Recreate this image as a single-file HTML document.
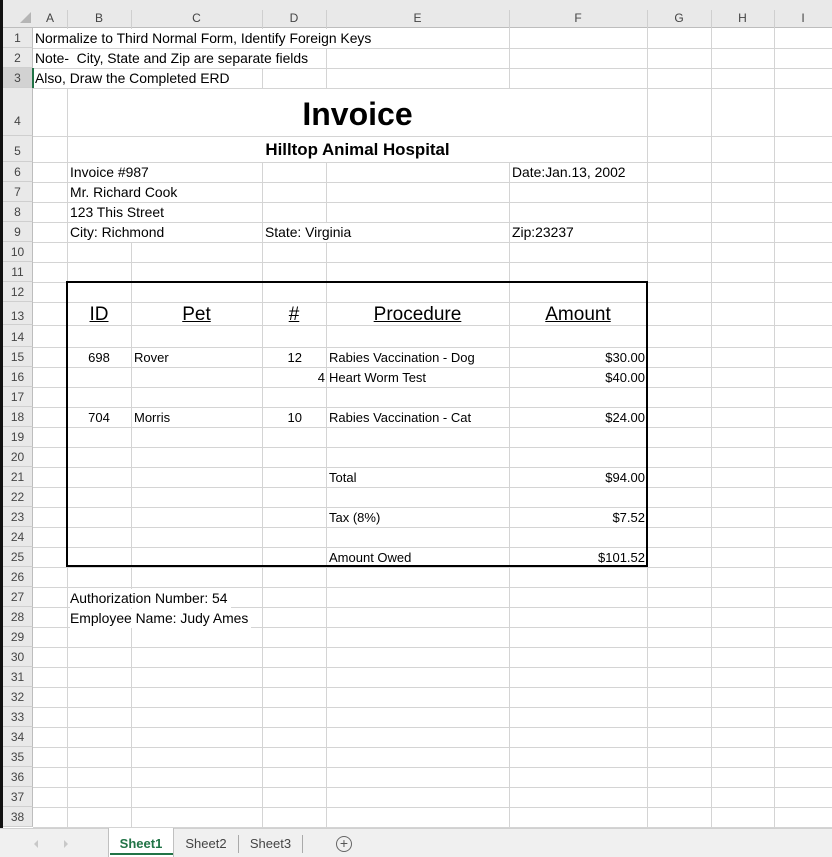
<!DOCTYPE html>
<html><head><meta charset="utf-8"><style>
*{margin:0;padding:0;box-sizing:border-box}
body{width:832px;height:857px;overflow:hidden;background:#fff;position:relative;font-family:"Liberation Sans",Arial,sans-serif}
.a{position:absolute;white-space:nowrap}
.v{position:absolute;top:28px;width:1px;height:800px;background:#d4d4d4}
.h{position:absolute;left:33px;width:799px;height:1px;background:#d4d4d4}
.rh{position:absolute;left:3px;width:30px;font-size:12px;color:#444;text-align:center;background:#e9e9e9;border-bottom:1px solid #cfcfcf;border-right:1px solid #bdbdbd}
.ch{position:absolute;top:11px;font-size:12px;color:#444;text-align:center}
.c{font-size:13.9px;color:#000;background:#fff}
.t{font-size:13px;color:#000}
.hd{font-size:19px;text-decoration:underline;text-align:center}
</style></head><body>
<div class="a" style="left:0;top:0;width:3px;height:828px;background:#111"></div>
<div class="a" style="left:3px;top:0;width:829px;height:28px;background:#e9e9e9;border-bottom:1px solid #bdbdbd"></div>
<div class="a" style="left:20px;top:12px;width:0;height:0;border-left:11px solid transparent;border-bottom:11px solid #b5b5b5"></div>
<div class="ch" style="left:33px;width:34px">A</div>
<div class="ch" style="left:67px;width:64px">B</div>
<div class="ch" style="left:131px;width:131px">C</div>
<div class="ch" style="left:262px;width:64px">D</div>
<div class="ch" style="left:326px;width:183px">E</div>
<div class="ch" style="left:509px;width:138px">F</div>
<div class="ch" style="left:647px;width:64px">G</div>
<div class="ch" style="left:711px;width:63px">H</div>
<div class="ch" style="left:774px;width:58px">I</div>
<div class="a" style="left:67px;top:10px;width:1px;height:18px;background:#cfcfcf"></div>
<div class="a" style="left:131px;top:10px;width:1px;height:18px;background:#cfcfcf"></div>
<div class="a" style="left:262px;top:10px;width:1px;height:18px;background:#cfcfcf"></div>
<div class="a" style="left:326px;top:10px;width:1px;height:18px;background:#cfcfcf"></div>
<div class="a" style="left:509px;top:10px;width:1px;height:18px;background:#cfcfcf"></div>
<div class="a" style="left:647px;top:10px;width:1px;height:18px;background:#cfcfcf"></div>
<div class="a" style="left:711px;top:10px;width:1px;height:18px;background:#cfcfcf"></div>
<div class="a" style="left:774px;top:10px;width:1px;height:18px;background:#cfcfcf"></div>

<div class="v" style="left:67px"></div><div class="v" style="left:131px"></div><div class="v" style="left:262px"></div><div class="v" style="left:326px"></div><div class="v" style="left:509px"></div><div class="v" style="left:647px"></div><div class="v" style="left:711px"></div><div class="v" style="left:774px"></div>

<div class="h" style="top:48px"></div><div class="h" style="top:68px"></div><div class="h" style="top:88px"></div><div class="h" style="top:136px"></div><div class="h" style="top:162px"></div><div class="h" style="top:182px"></div><div class="h" style="top:202px"></div><div class="h" style="top:222px"></div><div class="h" style="top:242px"></div><div class="h" style="top:262px"></div><div class="h" style="top:282px"></div><div class="h" style="top:302px"></div><div class="h" style="top:325px"></div><div class="h" style="top:347px"></div><div class="h" style="top:367px"></div><div class="h" style="top:387px"></div><div class="h" style="top:407px"></div><div class="h" style="top:427px"></div><div class="h" style="top:447px"></div><div class="h" style="top:467px"></div><div class="h" style="top:487px"></div><div class="h" style="top:507px"></div><div class="h" style="top:527px"></div><div class="h" style="top:547px"></div><div class="h" style="top:567px"></div><div class="h" style="top:587px"></div><div class="h" style="top:607px"></div><div class="h" style="top:627px"></div><div class="h" style="top:647px"></div><div class="h" style="top:667px"></div><div class="h" style="top:687px"></div><div class="h" style="top:707px"></div><div class="h" style="top:727px"></div><div class="h" style="top:747px"></div><div class="h" style="top:767px"></div><div class="h" style="top:787px"></div><div class="h" style="top:807px"></div><div class="h" style="top:827px"></div>

<div class="rh" style="top:28px;height:20px;line-height:20px">1</div>
<div class="rh" style="top:48px;height:20px;line-height:20px">2</div>
<div class="rh" style="top:68px;height:20px;line-height:20px;background:#d2d2d2">3</div>
<div class="rh" style="top:88px;height:48px;line-height:66px">4</div>
<div class="rh" style="top:136px;height:26px;line-height:30px">5</div>
<div class="rh" style="top:162px;height:20px;line-height:20px">6</div>
<div class="rh" style="top:182px;height:20px;line-height:20px">7</div>
<div class="rh" style="top:202px;height:20px;line-height:20px">8</div>
<div class="rh" style="top:222px;height:20px;line-height:20px">9</div>
<div class="rh" style="top:242px;height:20px;line-height:20px">10</div>
<div class="rh" style="top:262px;height:20px;line-height:20px">11</div>
<div class="rh" style="top:282px;height:20px;line-height:20px">12</div>
<div class="rh" style="top:302px;height:23px;line-height:28px">13</div>
<div class="rh" style="top:325px;height:22px;line-height:24px">14</div>
<div class="rh" style="top:347px;height:20px;line-height:20px">15</div>
<div class="rh" style="top:367px;height:20px;line-height:20px">16</div>
<div class="rh" style="top:387px;height:20px;line-height:20px">17</div>
<div class="rh" style="top:407px;height:20px;line-height:20px">18</div>
<div class="rh" style="top:427px;height:20px;line-height:20px">19</div>
<div class="rh" style="top:447px;height:20px;line-height:20px">20</div>
<div class="rh" style="top:467px;height:20px;line-height:20px">21</div>
<div class="rh" style="top:487px;height:20px;line-height:20px">22</div>
<div class="rh" style="top:507px;height:20px;line-height:20px">23</div>
<div class="rh" style="top:527px;height:20px;line-height:20px">24</div>
<div class="rh" style="top:547px;height:20px;line-height:20px">25</div>
<div class="rh" style="top:567px;height:20px;line-height:20px">26</div>
<div class="rh" style="top:587px;height:20px;line-height:20px">27</div>
<div class="rh" style="top:607px;height:20px;line-height:20px">28</div>
<div class="rh" style="top:627px;height:20px;line-height:20px">29</div>
<div class="rh" style="top:647px;height:20px;line-height:20px">30</div>
<div class="rh" style="top:667px;height:20px;line-height:20px">31</div>
<div class="rh" style="top:687px;height:20px;line-height:20px">32</div>
<div class="rh" style="top:707px;height:20px;line-height:20px">33</div>
<div class="rh" style="top:727px;height:20px;line-height:20px">34</div>
<div class="rh" style="top:747px;height:20px;line-height:20px">35</div>
<div class="rh" style="top:767px;height:20px;line-height:20px">36</div>
<div class="rh" style="top:787px;height:20px;line-height:20px">37</div>
<div class="rh" style="top:807px;height:20px;line-height:20px">38</div>
<div class="a" style="left:32px;top:68px;width:2px;height:20px;background:#217346"></div>

<div class="a c" style="left:35px;top:29px;line-height:19px;padding-right:4px">Normalize to Third Normal Form, Identify Foreign Keys</div>
<div class="a c" style="left:35px;top:49px;line-height:19px;padding-right:4px">Note-&nbsp; City, State and Zip are separate fields</div>
<div class="a c" style="left:35px;top:69px;line-height:19px;padding-right:4px">Also, Draw the Completed ERD</div>

<div class="a" style="left:68px;top:89px;width:579px;height:47px;background:#fff"></div>
<div class="a" style="left:68px;top:92px;width:579px;text-align:center;font-size:32px;font-weight:bold;line-height:44px">Invoice</div>
<div class="a" style="left:68px;top:137px;width:579px;height:25px;background:#fff"></div>
<div class="a" style="left:68px;top:139px;width:579px;text-align:center;font-size:16.9px;font-weight:bold;line-height:22px">Hilltop Animal Hospital</div>

<div class="a c" style="left:70px;top:163px;line-height:19px">Invoice #987</div>
<div class="a c" style="left:512px;top:163px;line-height:19px">Date:Jan.13, 2002</div>
<div class="a c" style="left:70px;top:183px;line-height:19px;padding-right:3px">Mr. Richard Cook</div>
<div class="a c" style="left:70px;top:203px;line-height:19px;padding-right:3px">123 This Street</div>
<div class="a c" style="left:70px;top:223px;line-height:19px">City: Richmond</div>
<div class="a c" style="left:265px;top:223px;line-height:19px;padding-right:3px">State: Virginia</div>
<div class="a c" style="left:512px;top:223px;line-height:19px">Zip:23237</div>

<div class="a" style="left:66px;top:281px;width:582px;height:286px;border:2px solid #000"></div>
<div class="a hd" style="left:67px;top:303px;width:64px;line-height:24px">ID</div>
<div class="a hd" style="left:131px;top:303px;width:131px;line-height:24px">Pet</div>
<div class="a hd" style="left:262px;top:303px;width:64px;line-height:24px">#</div>
<div class="a hd" style="left:326px;top:303px;width:183px;line-height:24px">Procedure</div>
<div class="a hd" style="left:509px;top:303px;width:138px;line-height:24px">Amount</div>

<div class="a t" style="left:67px;top:349px;width:64px;text-align:center;line-height:17px">698</div>
<div class="a t" style="left:134px;top:349px;line-height:17px">Rover</div>
<div class="a t" style="left:262px;top:349px;width:40px;text-align:right;line-height:17px">12</div>
<div class="a t" style="left:329px;top:349px;line-height:17px">Rabies Vaccination - Dog</div>
<div class="a t" style="left:509px;top:349px;width:136px;text-align:right;line-height:17px">$30.00</div>
<div class="a t" style="left:262px;top:369px;width:64px;text-align:right;padding-right:1px;line-height:17px">4</div>
<div class="a t" style="left:329px;top:369px;line-height:17px">Heart Worm Test</div>
<div class="a t" style="left:509px;top:369px;width:136px;text-align:right;line-height:17px">$40.00</div>
<div class="a t" style="left:67px;top:409px;width:64px;text-align:center;line-height:17px">704</div>
<div class="a t" style="left:134px;top:409px;line-height:17px">Morris</div>
<div class="a t" style="left:262px;top:409px;width:40px;text-align:right;line-height:17px">10</div>
<div class="a t" style="left:329px;top:409px;line-height:17px">Rabies Vaccination - Cat</div>
<div class="a t" style="left:509px;top:409px;width:136px;text-align:right;line-height:17px">$24.00</div>
<div class="a t" style="left:329px;top:469px;line-height:17px">Total</div>
<div class="a t" style="left:509px;top:469px;width:136px;text-align:right;line-height:17px">$94.00</div>
<div class="a t" style="left:329px;top:509px;line-height:17px">Tax (8%)</div>
<div class="a t" style="left:509px;top:509px;width:136px;text-align:right;line-height:17px">$7.52</div>
<div class="a t" style="left:329px;top:549px;line-height:17px">Amount Owed</div>
<div class="a t" style="left:509px;top:549px;width:136px;text-align:right;line-height:17px">$101.52</div>

<div class="a c" style="left:70px;top:589px;line-height:19px;padding-right:3px">Authorization Number: 54</div>
<div class="a c" style="left:70px;top:609px;line-height:19px;padding-right:3px">Employee Name: Judy Ames</div>

<div class="a" style="left:0;top:828px;width:832px;height:29px;background:#f0f0f0;border-top:1px solid #d0d0d0"></div>
<div class="a" style="left:34px;top:840px;width:0;height:0;border-top:4px solid transparent;border-bottom:4px solid transparent;border-right:4px solid #c8c8c8"></div>
<div class="a" style="left:64px;top:840px;width:0;height:0;border-top:4px solid transparent;border-bottom:4px solid transparent;border-left:4px solid #c8c8c8"></div>
<div class="a" style="left:108px;top:828px;width:66px;height:29px;background:#fff;border-left:1px solid #c0c0c0;border-right:1px solid #c0c0c0"></div>
<div class="a" style="left:110px;top:853px;width:63px;height:2px;background:#217346"></div>
<div class="a" style="left:108px;top:836px;width:66px;text-align:center;font-size:13px;font-weight:bold;color:#217346">Sheet1</div>
<div class="a" style="left:174px;top:836px;width:64px;text-align:center;font-size:13px;color:#444">Sheet2</div>
<div class="a" style="left:238px;top:835px;width:1px;height:18px;background:#aaa"></div>
<div class="a" style="left:239px;top:836px;width:63px;text-align:center;font-size:13px;color:#444">Sheet3</div>
<div class="a" style="left:302px;top:835px;width:1px;height:18px;background:#aaa"></div>
<div class="a" style="left:336px;top:836px;width:16px;height:16px;border:1.5px solid #666;border-radius:50%;text-align:center;font-size:14px;line-height:13px;color:#555">+</div>
</body></html>
